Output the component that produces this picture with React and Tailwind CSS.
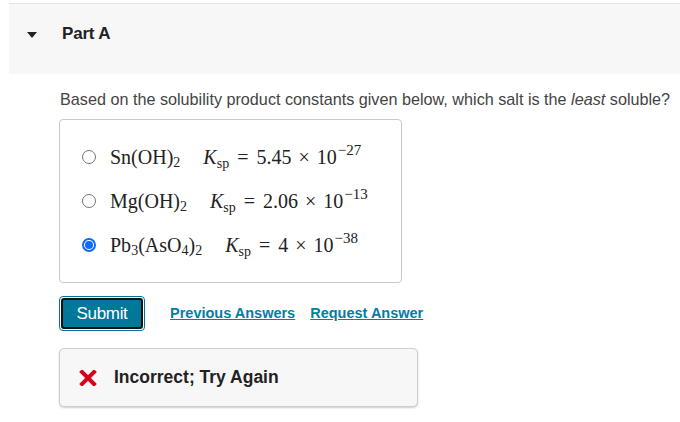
import React from 'react';

// Mastering-style question part: collapsible header, radio choices with
// Ksp values, submit row and feedback box.

const choices = [
  { id: 'sn', label: (<>Sn(OH)<sub className="text-[14px] relative top-[3px] align-baseline">2</sub></>), exp: '27', val: '5.45' },
  { id: 'mg', label: (<>Mg(OH)<sub className="text-[14px] relative top-[3px] align-baseline">2</sub></>), exp: '13', val: '2.06' },
  {
    id: 'pb',
    label: (
      <>
        Pb<sub className="text-[14px] relative top-[3px] align-baseline">3</sub>(AsO
        <sub className="text-[14px] relative top-[3px] align-baseline">4</sub>)
        <sub className="text-[14px] relative top-[3px] align-baseline">2</sub>
      </>
    ),
    exp: '38',
    val: '4',
  },
];

function Radio({ checked }) {
  if (checked) {
    return (
      <span className="w-[14px] h-[14px] rounded-full border-2 border-[#0a6cff] flex items-center justify-center shrink-0">
        <span className="w-[8px] h-[8px] rounded-full bg-[#0a6cff]" />
      </span>
    );
  }
  return <span className="w-[14px] h-[14px] rounded-full border border-[#767676] shrink-0" />;
}

function Ksp({ val, exp }) {
  return (
    <span className="whitespace-nowrap">
      <i>K</i>
      <sub className="text-[14px] relative top-[4px] align-baseline">sp</sub>
      <span className="mx-[8px]">=</span>
      {val}
      <span className="mx-[7px]">×</span>
      10<sup className="text-[15px] relative top-[-9px] align-baseline ml-[1px]">−{exp}</sup>
    </span>
  );
}

export default function App() {
  return (
    <div className="w-[680px] h-[422px] bg-white overflow-hidden font-['Liberation_Sans',Arial,sans-serif] text-[#333]">
      <div className="ml-[9px] mt-[3px] border-t border-[#e4e4e4] bg-[#f7f7f7] h-[71px] flex items-start pt-[20px]">
        <span className="ml-[18px] mt-[8px] w-0 h-0 border-l-[5px] border-r-[5px] border-t-[6px] border-l-transparent border-r-transparent border-t-[#222]" />
        <span className="ml-[25px] text-[17px] leading-[20px] font-bold text-[#222] tracking-[-0.2px]">Part A</span>
      </div>

      <div className="pl-[59px]">
        <p className="mt-[16px] pl-[1px] text-[16.2px] leading-[19px] text-[#444] whitespace-nowrap">
          Based on the solubility product constants given below, which salt is the <i>least</i> soluble?
        </p>

        <div className="mt-[10px] w-[343px] h-[164px] border border-[#c9c9c9] rounded-[4px] flex flex-col justify-center gap-[20px] pl-[22px] font-['Liberation_Serif','Times_New_Roman',serif] text-[20px] leading-[24px] text-[#222]">
          {choices.map((c) => (
            <div key={c.id} className="flex items-center">
              <Radio checked={c.id === 'pb'} />
              <span className="ml-[14px] whitespace-nowrap">{c.label}</span>
              <span className="ml-[23px]">
                <Ksp val={c.val} exp={c.exp} />
              </span>
            </div>
          ))}
        </div>

        <div className="mt-[13px] flex items-center">
          <button
            type="button"
            className="w-[86px] h-[35px] rounded-[4px] border border-[#00738f] p-[1px]"
          >
            <span className="flex items-center justify-center w-full h-full rounded-[3px] border-2 border-[#111] bg-[#00789a] text-white text-[17px] tracking-[-0.3px]">
              Submit
            </span>
          </button>
          <a className="ml-[25px] text-[14.5px] font-bold underline text-[#007fa3]">Previous Answers</a>
          <a className="ml-[15px] text-[14.5px] font-bold underline text-[#007fa3]">Request Answer</a>
        </div>

        <div className="mt-[17px] w-[359px] h-[59px] rounded-[5px] border border-[#cfcfcf] bg-[#f7f7f7] shadow-[0_1px_2px_rgba(0,0,0,0.2)] flex items-center">
          <svg width="18" height="16" viewBox="0 0 18 16" className="ml-[19px]">
            <path d="M3 2 L15 14 M15 2 L3 14" stroke="#d9001b" strokeWidth="4" strokeLinecap="square" />
          </svg>
          <span className="ml-[17px] text-[17.5px] font-bold text-[#222]">Incorrect; Try Again</span>
        </div>
      </div>
    </div>
  );
}
